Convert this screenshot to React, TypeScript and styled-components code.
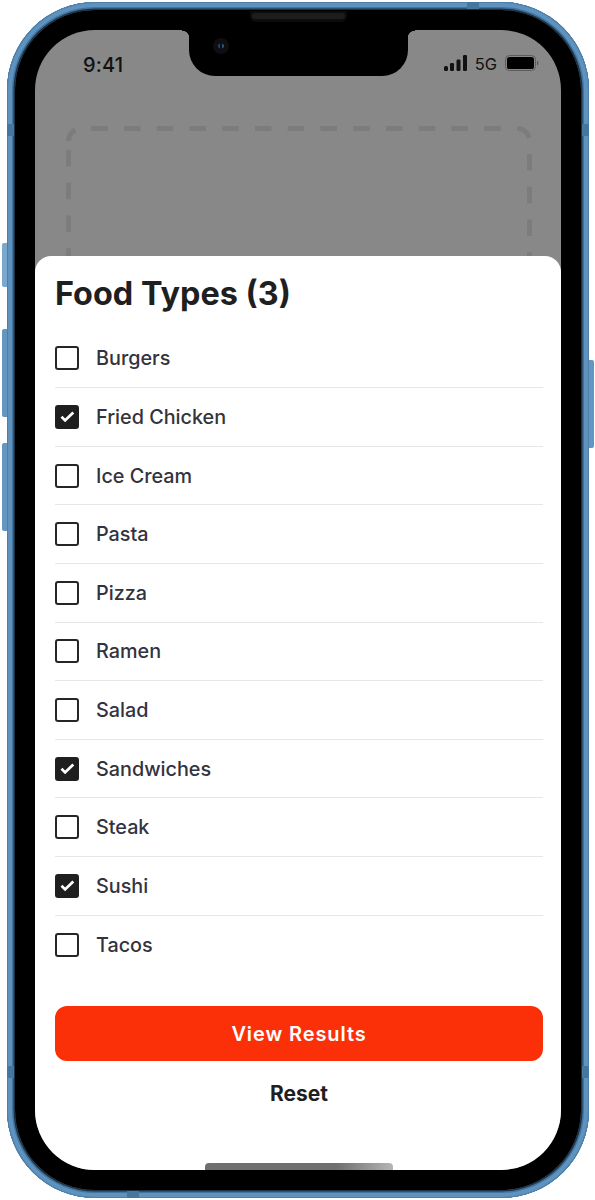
import styled, { createGlobalStyle } from "styled-components";

const FOOD_TYPES = [
  { name: "Burgers", checked: false },
  { name: "Fried Chicken", checked: true },
  { name: "Ice Cream", checked: false },
  { name: "Pasta", checked: false },
  { name: "Pizza", checked: false },
  { name: "Ramen", checked: false },
  { name: "Salad", checked: false },
  { name: "Sandwiches", checked: true },
  { name: "Steak", checked: false },
  { name: "Sushi", checked: true },
  { name: "Tacos", checked: false },
];

const GlobalStyle = createGlobalStyle`
  html, body {
    margin: 0;
    padding: 0;
    background: #fff;
  }
  body {
    font-family: Inter, "Liberation Sans", sans-serif;
  }
`;

const Page = styled.div`
  width: 595px;
  height: 1200px;
  padding: 2px 6px 2px 7px;
  box-sizing: border-box;
`;

const Frame = styled.div`
  position: relative;
  height: 1196px;
  box-sizing: border-box;
  padding: 8px;
  border-radius: 88px;
  background: #5f93bf;
  box-shadow: inset 0 0 0 1px #4d7fa9, inset 0 0 0 5px #5f93bf,
    inset 0 0 0 6.5px #43749d, inset 0 0 0 8px #1f3347;
`;

const SideButton = styled.div<{ $side: "left" | "right"; $top: number; $height: number; $light?: boolean }>`
  position: absolute;
  top: ${(p) => p.$top}px;
  ${(p) => (p.$side === "left" ? "left: -5px;" : "right: -5px;")}
  width: 5px;
  height: ${(p) => p.$height}px;
  border-radius: ${(p) => (p.$side === "left" ? "2px 0 0 2px" : "0 2px 2px 0")};
  background: ${(p) => (p.$light ? "#7ba8cd" : "#6496bf")};
`;

const Band = styled.div<{ $x?: string; $y?: string; $wide?: boolean }>`
  position: absolute;
  ${(p) => p.$x ?? ""}
  ${(p) => p.$y ?? ""}
  width: ${(p) => (p.$wide ? "12px" : "7px")};
  height: ${(p) => (p.$wide ? "7px" : "12px")};
  background: #44769f;
`;

const Bezel = styled.div`
  height: 100%;
  box-sizing: border-box;
  padding: 20px;
  border-radius: 80px;
  background: #000;
`;

const Speaker = styled.div`
  position: absolute;
  top: 9px;
  left: 243px;
  width: 97px;
  height: 11px;
  box-sizing: border-box;
  padding: 2px 2px;
  border-radius: 0 0 6px 6px;
  background: #0c0c0c;
  &::after {
    content: "";
    display: block;
    height: 6px;
    border-radius: 3px;
    background: #1d1d1d;
  }
`;

const Screen = styled.div`
  position: relative;
  height: 100%;
  display: flex;
  flex-direction: column;
  border-radius: 60px;
  overflow: hidden;
  background: #888;
`;

const Notch = styled.div`
  position: absolute;
  top: 0;
  left: 154px;
  width: 219px;
  height: 46px;
  border-radius: 0 0 26px 26px;
  background: #000;
  &::before,
  &::after {
    content: "";
    position: absolute;
    top: 0;
    width: 7px;
    height: 8px;
  }
  &::before {
    left: -7px;
    background: radial-gradient(circle at 0 100%, transparent 7px, #000 7.5px);
  }
  &::after {
    right: -7px;
    background: radial-gradient(circle at 100% 100%, transparent 7px, #000 7.5px);
  }
`;

const Camera = styled.svg`
  position: absolute;
  top: 7px;
  left: 23px;
`;

const Backdrop = styled.div`
  flex: 0 0 226px;
  display: flex;
  flex-direction: column;
  overflow: hidden;
`;

const StatusBar = styled.div`
  flex: 0 0 96px;
  display: flex;
  justify-content: space-between;
  align-items: flex-start;
  padding: 24px 22px 0 48px;
  box-sizing: border-box;
  color: #111;
`;

const Time = styled.span`
  font-size: 20px;
  line-height: 22px;
  font-weight: 500;
  letter-spacing: 0.2px;
`;

const StatusIcons = styled.div`
  display: flex;
  align-items: center;
  height: 22px;
  margin-top: -2px;
  gap: 8px;
`;

const Network = styled.span`
  margin-top: 2px;
  font-size: 16.5px;
  line-height: 22px;
  font-weight: 400;
`;

const Placeholder = styled.svg`
  display: block;
  align-self: flex-start;
  margin-left: 31px;
`;

const Sheet = styled.div`
  flex: 1;
  min-height: 0;
  display: flex;
  flex-direction: column;
  padding: 0 18px 0 20px;
  border-radius: 16px 16px 0 0;
  background: #fff;
`;

const Title = styled.h1`
  margin: 0;
  height: 73.5px;
  padding-top: 17px;
  box-sizing: border-box;
  font-size: 32.4px;
  line-height: 42px;
  font-weight: 700;
  color: #1f1f1f;
`;

const List = styled.div`
  display: flex;
  flex-direction: column;
`;

const Row = styled.label`
  flex: 0 0 58.62px;
  display: flex;
  align-items: center;
  gap: 17px;
  box-sizing: border-box;
  border-bottom: 1px solid #e6e6e6;
  &:last-child {
    border-bottom: none;
  }
`;

const CheckBox = styled.span<{ $checked: boolean }>`
  width: 24px;
  height: 24px;
  box-sizing: border-box;
  display: flex;
  align-items: center;
  justify-content: center;
  border: 2.8px solid ${(p) => (p.$checked ? "#1f1f1f" : "#262626")};
  border-radius: 3px;
  background: ${(p) => (p.$checked ? "#1f1f1f" : "#fff")};
`;

const Label = styled.span`
  font-size: 19.8px;
  line-height: 26px;
  font-weight: 500;
  color: #33333d;
`;

const PrimaryButton = styled.button`
  flex: 0 0 55px;
  margin-top: 32px;
  border: none;
  border-radius: 12px;
  background: #fb3008;
  color: #fff;
  font-family: inherit;
  font-size: 20px;
  font-weight: 600;
  letter-spacing: 0.9px;
`;

const SecondaryButton = styled.button`
  flex: 0 0 32px;
  margin-top: 16px;
  padding: 0;
  border: none;
  background: none;
  color: #1f1f1f;
  font-family: inherit;
  font-size: 21px;
  font-weight: 700;
`;

const HomeIndicator = styled.div`
  flex: 0 0 7px;
  width: 188px;
  margin-top: auto;
  align-self: center;
  border-radius: 4px 4px 0 0;
  background: linear-gradient(90deg, #6f6f6f 0%, #6f6f6f 70%, #b5b5b5 100%);
`;

const Check = () => (
  <svg width="19" height="19" viewBox="0 0 19 19" fill="none">
    <path d="M3.5 9.8l3.6 3.6L15.3 5.5" stroke="#fff" strokeWidth="2.8" />
  </svg>
);

const SignalBars = () => (
  <svg width="23" height="16" viewBox="0 0 23 16" fill="#111">
    <rect x="0" y="11" width="4" height="5" rx="1.5" />
    <rect x="6" y="8" width="4" height="8" rx="1.2" />
    <rect x="12.5" y="4.5" width="4" height="11.5" rx="1.2" />
    <rect x="19" y="0" width="4" height="16" rx="1.2" />
  </svg>
);

const Battery = () => (
  <svg width="34" height="16" viewBox="0 0 34 16">
    <rect x="0.5" y="0.5" width="30" height="15" rx="4" fill="none" stroke="#5c5c5c" />
    <rect x="2" y="2" width="27" height="12" rx="2.6" fill="#000" />
    <rect x="32" y="6" width="1.2" height="4" rx="0.6" fill="#555" />
  </svg>
);

export default function App() {
  const count = FOOD_TYPES.filter((f) => f.checked).length;

  return (
    <Page>
      <GlobalStyle />
      <Frame>
        <SideButton $side="left" $top={241} $height={44} $light />
        <SideButton $side="left" $top={327} $height={88} />
        <SideButton $side="left" $top={441} $height={88} />
        <SideButton $side="right" $top={358} $height={88} />
        <Band $x="left: 0;" $y="top: 122px;" />
        <Band $x="right: 0;" $y="top: 122px;" />
        <Band $x="left: 460px;" $y="top: 0;" $wide />
        <Band $x="left: 120px;" $y="bottom: 0;" $wide />
        <Band $x="left: 0;" $y="top: 1064px;" />
        <Band $x="right: 0;" $y="top: 1064px;" />
        <Bezel>
          <Screen>
            <Backdrop>
              <StatusBar>
                <Time>9:41</Time>
                <StatusIcons>
                  <SignalBars />
                  <Network>5G</Network>
                  <Battery />
                </StatusIcons>
              </StatusBar>
              <Placeholder width="466" height="130" viewBox="0 0 466 130" fill="none" stroke="#7c7c7c" strokeWidth="5">
                <path
                  d="M2.5 15A12.5 12.5 0 0 1 15 2.5H451.5A12 12 0 0 1 463.5 14.5V130"
                  strokeDasharray="16.5 16.25"
                  strokeDashoffset="3"
                />
                <path d="M2.5 24V130" strokeDasharray="16.4 16.35" />
              </Placeholder>
            </Backdrop>
            <Sheet>
              <Title>Food Types ({count})</Title>
              <List>
                {FOOD_TYPES.map((food) => (
                  <Row key={food.name}>
                    <CheckBox $checked={food.checked}>{food.checked && <Check />}</CheckBox>
                    <Label>{food.name}</Label>
                  </Row>
                ))}
              </List>
              <PrimaryButton>View Results</PrimaryButton>
              <SecondaryButton>Reset</SecondaryButton>
              <HomeIndicator />
            </Sheet>
            <Notch>
              <Camera width="18" height="18" viewBox="0 0 18 18">
                <circle cx="9" cy="9" r="8" fill="#0e0e12" />
                <path d="M7.6 6.5a3 3 0 0 0 0 5z" fill="#2f5f92" />
                <path d="M10.4 6.5a3 3 0 0 1 0 5z" fill="#3f78b4" />
              </Camera>
            </Notch>
          </Screen>
        </Bezel>
        <Speaker />
      </Frame>
    </Page>
  );
}
